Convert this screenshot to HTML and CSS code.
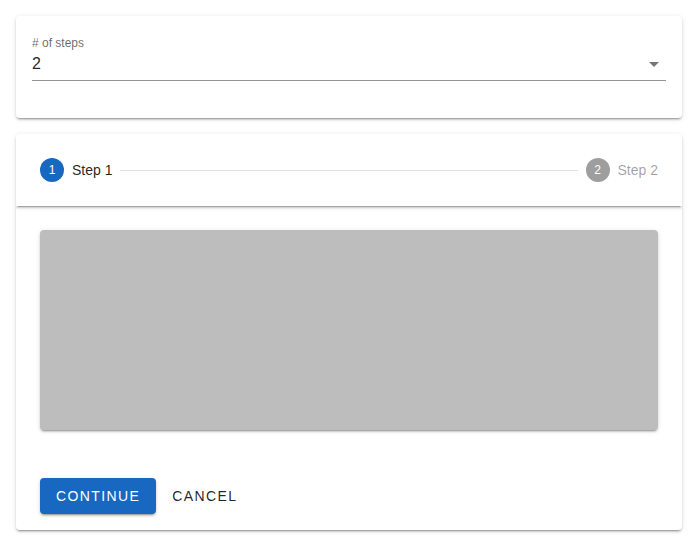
FILE: index.html
```html
<!DOCTYPE html>
<html>
<head>
<meta charset="utf-8">
<link rel="stylesheet" href="styles.css">
</head>
<body>
<div class="page">
  <div class="card select-card">
    <div class="field">
      <div class="field-label"># of steps</div>
      <div class="field-row">
        <span class="field-value">2</span>
        <svg class="field-arrow" viewBox="0 0 24 24" width="24" height="24"><path d="M7,10L12,15L17,10H7Z" fill="rgba(0,0,0,0.54)"/></svg>
      </div>
      <div class="field-details"></div>
    </div>
  </div>

  <div class="card stepper">
    <div class="stepper-header">
      <div class="step active">
        <span class="step-num">1</span>
        <span class="step-label">Step 1</span>
      </div>
      <div class="step-divider"></div>
      <div class="step">
        <span class="step-num">2</span>
        <span class="step-label">Step 2</span>
      </div>
    </div>
    <div class="stepper-content">
      <div class="placeholder"></div>
      <div class="actions">
        <button class="btn btn-primary">Continue</button>
        <button class="btn btn-text">Cancel</button>
      </div>
    </div>
  </div>
</div>
</body>
</html>
```

FILE: styles.css
```css
* { box-sizing: border-box; }
html, body { margin: 0; padding: 0; background: #fff; }
body {
  font-family: "Liberation Sans", Arial, sans-serif;
  color: rgba(0,0,0,0.87);
}
.page {
  padding: 16px;
  display: flex;
  flex-direction: column;
  gap: 16px;
}
.card {
  background: #fff;
  border-radius: 4px;
  box-shadow: 0 3px 1px -2px rgba(0,0,0,.2), 0 2px 2px 0 rgba(0,0,0,.14), 0 1px 5px 0 rgba(0,0,0,.12);
}
.select-card { padding: 16px; }
.field-label {
  padding-top: 4px;
  font-size: 12px;
  line-height: 14px;
  color: rgba(0,0,0,0.6);
}
.field-row {
  display: flex;
  align-items: center;
  justify-content: space-between;
  padding-top: 4px;
  padding-bottom: 6px;
  height: 31px;
  border-bottom: 1px solid rgba(0,0,0,0.42);
}
.field-value {
  font-size: 16px;
  line-height: 20px;
}
.field-arrow { display: block; margin: -2px 0; }
.field-details { height: 21px; }

.stepper { overflow: hidden; }
.stepper-header {
  display: flex;
  align-items: center;
  height: 72px;
  box-shadow: 0 3px 1px -2px rgba(0,0,0,.2), 0 2px 2px 0 rgba(0,0,0,.14), 0 1px 5px 0 rgba(0,0,0,.12);
}
.step {
  display: flex;
  align-items: center;
  padding: 24px;
}
.step-num {
  width: 24px;
  height: 24px;
  border-radius: 50%;
  background: rgba(0,0,0,0.38);
  color: #fff;
  font-size: 12px;
  display: flex;
  align-items: center;
  justify-content: center;
  margin-right: 8px;
}
.step-label {
  font-size: 14px;
  line-height: 20px;
  color: rgba(0,0,0,0.38);
}
.step.active .step-num { background: #1867c0; }
.step.active .step-label { color: rgba(0,0,0,0.87); }
.step-divider {
  flex: 1;
  height: 1px;
  background: rgba(0,0,0,0.12);
  margin: 0 -16px;
}
.stepper-content { padding: 24px 24px 16px; }
.placeholder {
  height: 200px;
  background: #bdbdbd;
  border-radius: 4px;
  margin-bottom: 48px;
  box-shadow: 0 3px 1px -2px rgba(0,0,0,.2), 0 2px 2px 0 rgba(0,0,0,.14), 0 1px 5px 0 rgba(0,0,0,.12);
}
.actions { display: flex; align-items: center; }
.btn {
  font-family: "Liberation Sans", Arial, sans-serif;
  height: 36px;
  padding: 0 16px;
  border: none;
  border-radius: 4px;
  font-size: 14px;
  font-weight: 400;
  letter-spacing: 1.4px;
  text-transform: uppercase;
  background: transparent;
  cursor: pointer;
}
.btn-primary {
  background: #1867c0;
  color: #fff;
  box-shadow: 0 3px 1px -2px rgba(0,0,0,.2), 0 2px 2px 0 rgba(0,0,0,.14), 0 1px 5px 0 rgba(0,0,0,.12);
}
.btn-text { color: rgba(0,0,0,0.87); }
```
